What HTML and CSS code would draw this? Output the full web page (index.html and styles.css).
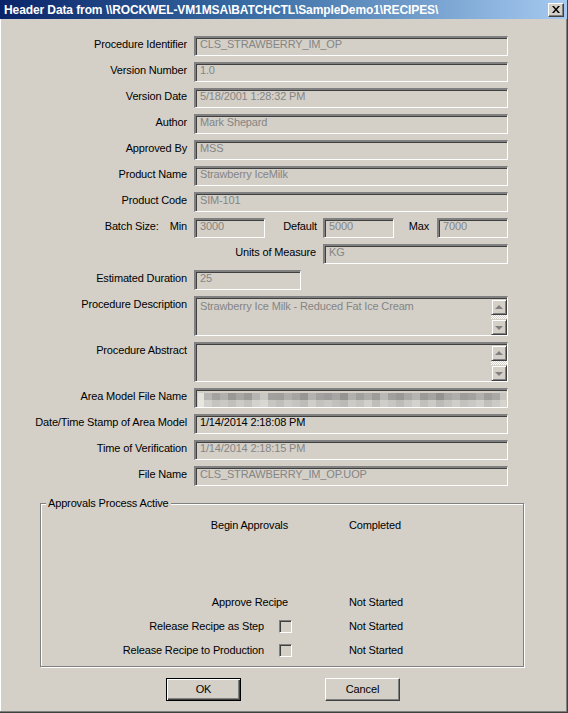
FILE: index.html
```html
<!DOCTYPE html>
<html>
<head>
<meta charset="utf-8">
<link rel="stylesheet" href="styles.css">
</head>
<body>
<div class="window">
  <div class="titlebar">
    <span class="title">Header Data from \\ROCKWEL-VM1MSA\BATCHCTL\SampleDemo1\RECIPES\</span>
    <span class="close"><svg width="8" height="7" viewBox="0 0 8 7"><path d="M0 0h2l2 2.5L6 0h2L5 3.5 8 7H6L4 4.5 2 7H0l3-3.5z" fill="#000"/></svg></span>
  </div>
  <div class="form">
    <div class="lbl">Procedure Identifier</div><div class="field">CLS_STRAWBERRY_IM_OP</div>
    <div class="lbl">Version Number</div><div class="field">1.0</div>
    <div class="lbl">Version Date</div><div class="field">5/18/2001 1:28:32 PM</div>
    <div class="lbl">Author</div><div class="field">Mark Shepard</div>
    <div class="lbl">Approved By</div><div class="field">MSS</div>
    <div class="lbl">Product Name</div><div class="field">Strawberry IceMilk</div>
    <div class="lbl">Product Code</div><div class="field">SIM-101</div>
    <div class="lbl batch-lbl"><span>Batch Size:</span><span>Min</span></div>
    <div class="batch">
      <div class="field small">3000</div>
      <span class="sublbl w-default">Default</span>
      <div class="field small">5000</div>
      <span class="sublbl w-max">Max</span>
      <div class="field small">7000</div>
    </div>
    <div class="units-row">
      <span class="lbl">Units of Measure</span>
      <div class="field units">KG</div>
    </div>
    <div class="lbl">Estimated Duration</div><div><div class="field dur">25</div></div>
    <div class="lbl">Procedure Description</div>
    <div class="field multi">
      <div class="multi-text">Strawberry Ice Milk - Reduced Fat Ice Cream</div>
      <div class="scroll">
        <div class="sbtn"><span class="arr up"></span></div>
        <div class="track"></div>
        <div class="sbtn"><span class="arr down"></span></div>
      </div>
    </div>
    <div class="lbl">Procedure Abstract</div>
    <div class="field multi">
      <div class="multi-text"></div>
      <div class="scroll">
        <div class="sbtn"><span class="arr up"></span></div>
        <div class="track"></div>
        <div class="sbtn"><span class="arr down"></span></div>
      </div>
    </div>
    <div class="lbl">Area Model File Name</div>
    <div class="field blurred"><div class="blur-top"></div><div class="blur-bot"></div></div>
    <div class="lbl">Date/Time Stamp of Area Model</div><div class="field dark">1/14/2014 2:18:08 PM</div>
    <div class="lbl">Time of Verification</div><div class="field">1/14/2014 2:18:15 PM</div>
    <div class="lbl">File Name</div><div class="field">CLS_STRAWBERRY_IM_OP.UOP</div>
  </div>

  <fieldset class="group">
    <legend>Approvals Process Active</legend>
    <div class="ggrid">
      <div class="glbl first">Begin Approvals</div><div class="gstat first">Completed</div>
      <div class="glbl">Approve Recipe</div><div class="gstat">Not Started</div>
      <div class="glbl chk"><span>Release Recipe as Step</span><span class="cbox"></span></div><div class="gstat">Not Started</div>
      <div class="glbl chk"><span>Release Recipe to Production</span><span class="cbox"></span></div><div class="gstat">Not Started</div>
    </div>
  </fieldset>

  <div class="buttons">
    <div class="btn default"><span>OK</span></div>
    <div class="btn"><span>Cancel</span></div>
  </div>
</div>
</body>
</html>
```

FILE: styles.css
```css
html, body {
  margin: 0;
  padding: 0;
  background: #d4d0c8;
}
.window {
  width: 568px;
  height: 713px;
  box-sizing: border-box;
  background: #d4d0c8;
  border-right: 1px solid #404040;
  border-bottom: 1px solid #404040;
  box-shadow: inset -1px -1px 0 #808080, inset 1px 0 0 #ffffff;
  font-family: "Liberation Sans", Arial, sans-serif;
  font-size: 11px;
  letter-spacing: -0.15px;
  color: #000;
  overflow: hidden;
}
.titlebar {
  height: 19px;
  background: linear-gradient(90deg, #0a246a 0%, #3a6ea5 45%, #a6caf0 100%);
  display: flex;
  align-items: center;
  justify-content: space-between;
  padding: 0 3px 0 4px;
}
.title {
  color: #fff;
  font-weight: bold;
  font-size: 12px;
  letter-spacing: -0.1px;
  white-space: nowrap;
}
.close {
  width: 16px;
  height: 14px;
  box-sizing: border-box;
  background: #d4d0c8;
  border-top: 1px solid #fff;
  border-left: 1px solid #fff;
  border-right: 1px solid #404040;
  border-bottom: 1px solid #404040;
  box-shadow: inset -1px -1px 0 #808080;
  display: flex;
  align-items: center;
  justify-content: center;
  padding: 0 1px 1px 0;
}
.form {
  display: grid;
  grid-template-columns: 187px 314px;
  column-gap: 7px;
  row-gap: 6px;
  padding-top: 17px;
}
.lbl {
  text-align: right;
  line-height: 14px;
  padding-top: 1px;
  white-space: nowrap;
}
.field {
  height: 20px;
  box-sizing: border-box;
  border-top: 2px solid #808080;
  border-left: 2px solid #808080;
  border-right: 1px solid #fff;
  border-bottom: 1px solid #fff;
  box-shadow: inset 1px 1px 0 #404040;
  padding: 0 0 0 4px;
  line-height: 13px;
  color: #858585;
  white-space: nowrap;
  overflow: hidden;
}
.field.dark { color: #000; }
.batch-lbl {
  display: flex;
  justify-content: flex-end;
  gap: 11px;
}
.batch {
  display: flex;
  align-items: flex-start;
}
.field.small { width: 71px; flex: none; }
.sublbl {
  text-align: right;
  line-height: 14px;
  padding-top: 1px;
}
.w-default { width: 52px; margin-right: 6px; }
.w-max { width: 35px; margin-right: 8px; }
.units-row {
  grid-column: 1 / 3;
  display: flex;
  justify-content: flex-end;
  gap: 7px;
}
.field.units { width: 185px; }
.field.dur { width: 107px; }
.field.multi {
  height: 40px;
  display: flex;
  padding: 0;
}
.multi-text {
  flex: 1;
  padding: 1px 0 0 4px;
  line-height: 14px;
}
.scroll {
  width: 16px;
  display: flex;
  flex-direction: column;
  padding-top: 1px;
}
.sbtn {
  width: 16px;
  height: 16px;
  box-sizing: border-box;
  background: #d4d0c8;
  border-top: 1px solid #d4d0c8;
  border-left: 1px solid #d4d0c8;
  border-right: 1px solid #404040;
  border-bottom: 1px solid #404040;
  box-shadow: inset 1px 1px 0 #fff, inset -1px -1px 0 #808080;
  display: flex;
  align-items: center;
  justify-content: center;
}
.track {
  flex: 1;
  background: repeating-conic-gradient(#ffffff 0 25%, #d4d0c8 0 50%) 0 0 / 2px 2px;
}
.arr {
  width: 0;
  height: 0;
  border-left: 4px solid transparent;
  border-right: 4px solid transparent;
}
.arr.up { border-bottom: 4px solid #808080; margin-bottom: 1px; }
.arr.down { border-top: 4px solid #808080; margin-top: 1px; }
.field.blurred {
  padding: 2px 0 0 2px;
}
.blur-top, .blur-bot {
  width: 308px;
}
.blur-top {
  height: 7px;
  margin-top: 1px;
  background: linear-gradient(90deg,
    #e4e2dc 0 6px, #b8b6b2 6px 14px, #a4a2a0 14px 22px, #b2b0ac 22px 30px, #9a9896 30px 38px,
    #a8a6a2 38px 46px, #9c9a98 46px 54px, #b6b4b0 54px 62px, #cac8c2 62px 70px, #a2a09e 70px 78px,
    #a09e9c 78px 86px, #b0aeaa 86px 94px, #a6a4a2 94px 102px, #989694 102px 110px, #b4b2ae 110px 118px,
    #a4a2a0 118px 126px, #9e9c9a 126px 134px, #a8a6a4 134px 142px, #969492 142px 150px, #b2b0ac 150px 158px,
    #a0a09c 158px 166px, #aeacaa 166px 174px, #9e9c9a 174px 182px, #bab8b4 182px 190px, #a2a09e 190px 198px,
    #9a9896 198px 206px, #aaa8a6 206px 214px, #b6b4b0 214px 222px, #9c9a98 222px 230px, #a6a4a2 230px 238px,
    #94928f 238px 246px, #a8a6a4 246px 254px, #b0aeaa 254px 262px, #9e9c9a 262px 270px, #a4a2a0 270px 278px,
    #b2b0ac 278px 286px, #a09e9c 286px 294px, #aaa8a6 294px 302px, #c8c6c0 302px 308px);
}
.blur-bot {
  height: 8px;
  background: linear-gradient(90deg,
    #e8e6e0 0 6px, #d2d0ca 6px 14px, #c6c4c0 14px 22px, #ccc9c4 22px 30px, #c2c0bc 30px 38px,
    #cecbc6 38px 46px, #c4c2be 46px 54px, #d4d2cc 54px 62px, #dad8d2 62px 70px, #c8c6c2 70px 78px,
    #c0beba 78px 86px, #cccac4 86px 94px, #c6c4c0 94px 102px, #bebcb8 102px 110px, #d0cec8 110px 118px,
    #c4c2be 118px 126px, #cac8c4 126px 134px, #c2c0bc 134px 142px, #bcbab6 142px 150px, #cecbc6 150px 158px,
    #c6c4c0 158px 166px, #d2d0ca 166px 174px, #c0beba 174px 182px, #d0cec8 182px 190px, #c8c6c2 190px 198px,
    #bebcb8 198px 206px, #cac8c4 206px 214px, #d4d2cc 214px 222px, #c2c0bc 222px 230px, #cccac4 230px 238px,
    #bcbab6 238px 246px, #c6c4c0 246px 254px, #d0cec8 254px 262px, #c4c2be 262px 270px, #cac8c4 270px 278px,
    #d2d0ca 278px 286px, #c2c0bc 286px 294px, #cccac4 294px 302px, #d6d4ce 302px 308px);
}
.group {
  margin: 11px 43px 0 40px;
  padding: 9px 0 9px 0;
  border: 1px solid #808080;
  box-shadow: inset 1px 1px 0 #fff, 1px 1px 0 #fff;
  min-width: 0;
}
.group legend {
  margin-left: 5px;
  padding: 0 2px;
  background: #d4d0c8;
  line-height: 13px;
}
.ggrid {
  display: grid;
  grid-template-columns: 251px auto;
  column-gap: 57px;
  row-gap: 11px;
}
.glbl {
  text-align: right;
  line-height: 13px;
  padding-right: 4px;
  white-space: nowrap;
}
.gstat {
  line-height: 13px;
  white-space: nowrap;
}
.glbl.first, .gstat.first {
  margin-bottom: 53px;
}
.glbl.chk {
  display: flex;
  justify-content: flex-end;
  align-items: center;
  gap: 15px;
  padding-right: 0;
}
.cbox {
  width: 13px;
  height: 13px;
  box-sizing: border-box;
  border-top: 1px solid #808080;
  border-left: 1px solid #808080;
  border-right: 1px solid #fff;
  border-bottom: 1px solid #fff;
  box-shadow: inset 1px 1px 0 #404040, inset -1px -1px 0 #d4d0c8;
  background: #d4d0c8;
}
.buttons {
  display: flex;
  justify-content: center;
  gap: 84px;
  margin-top: 11px;
  padding-right: 1px;
}
.btn {
  width: 75px;
  height: 23px;
  box-sizing: border-box;
  border-top: 1px solid #fff;
  border-left: 1px solid #fff;
  border-right: 1px solid #404040;
  border-bottom: 1px solid #404040;
  box-shadow: inset -1px -1px 0 #808080;
  display: flex;
  align-items: center;
  justify-content: center;
  line-height: 13px;
}
.btn.default {
  border: 1px solid #000;
  box-shadow: inset 1px 1px 0 #fff, inset -1px -1px 0 #404040, inset -2px -2px 0 #808080;
}
```
